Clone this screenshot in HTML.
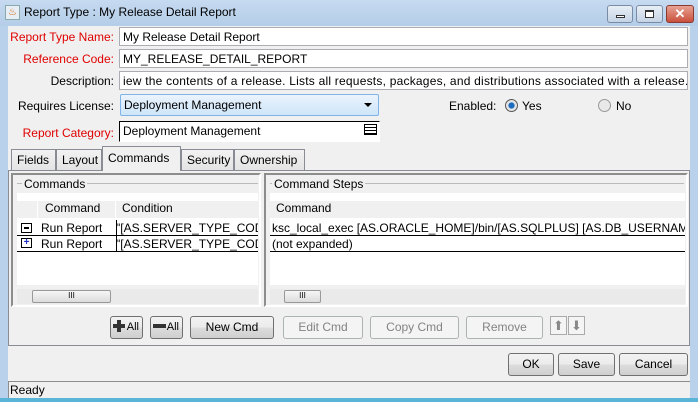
<!DOCTYPE html>
<html><head><style>
*{box-sizing:border-box;margin:0;padding:0}
body{width:698px;height:402px;overflow:hidden;background:#b9d1ea;font-family:"Liberation Sans",sans-serif;font-size:12px;color:#000;position:relative}
.a{position:absolute}
.lbl{position:absolute;text-align:right;white-space:nowrap}
.red{color:#e00000}
.fld{position:absolute;background:#fff;border:1px solid #abadb3;padding:2px 3px;white-space:nowrap;overflow:hidden;height:19px;line-height:14px}
.btn{position:absolute;border:1px solid #707070;border-radius:3px;background:linear-gradient(#f2f2f2,#ebebeb 50%,#dddddd 51%,#cfcfcf);text-align:center;line-height:20px;height:23px}
.dis{border-color:#adb2b5;background:#f4f4f4;color:#838383}
.tab{position:absolute;border:1px solid #898c95;border-bottom:none;background:linear-gradient(#f2f2f2,#e3e3e3);padding-left:5px;line-height:20px;height:22px}
.grp{position:absolute;border:2px solid #8d8d8d;border-right-color:#fff;border-bottom-color:#fff;background:#f0f0f0}
.cell{position:absolute;white-space:nowrap;overflow:hidden}
</style></head><body>
<div class="a" style="left:0;top:0;width:698px;height:26px;background:linear-gradient(#c6daf0,#b4cde8)"></div>
<div class="a" style="left:5px;top:5px;width:15px;height:15px;border:1px solid #8aa;background:#e8eef5;font-size:10px;line-height:13px;text-align:center;color:#c60">♨</div>
<div class="a" style="left:24px;top:5px;font-size:12px">Report Type : My Release Detail Report</div>
<div class="a" style="left:607px;top:5px;width:26px;height:18px;border:1px solid #7a8ca5;border-radius:3px;background:linear-gradient(#e8eef6,#c5d4e6)"><div class="a" style="left:8px;top:9px;width:9px;height:3px;border:1px solid #333;background:#fff"></div></div>
<div class="a" style="left:636px;top:5px;width:27px;height:18px;border:1px solid #7a8ca5;border-radius:3px;background:linear-gradient(#e8eef6,#c5d4e6)"><div class="a" style="left:8px;top:4px;width:9px;height:8px;border:1px solid #333;border-top-width:2px;background:#fff"></div></div>
<div class="a" style="left:666px;top:5px;width:28px;height:18px;border:1px solid #8a3a30;border-radius:3px;background:linear-gradient(#e8a294,#c9503c);color:#fff;font-weight:bold;text-align:center;line-height:16px;font-size:13px">✕</div>
<div class="a" style="left:8px;top:26px;width:682px;height:372px;background:#f0f0f0"></div>
<div class="lbl red" style="right:584px;top:30px">Report Type Name:</div>
<div class="fld" style="left:119px;top:27px;width:569px">My Release Detail Report</div>
<div class="lbl red" style="right:584px;top:52px">Reference Code:</div>
<div class="fld" style="left:119px;top:49px;width:569px">MY_RELEASE_DETAIL_REPORT</div>
<div class="lbl" style="right:584px;top:74px">Description:</div>
<div class="fld" style="left:119px;top:71px;width:569px;letter-spacing:0.22px">iew the contents of a release. Lists all requests, packages, and distributions associated with a release.</div>
<div class="lbl" style="right:584px;top:99px">Requires License:</div>
<div class="a" style="left:120px;top:94px;width:259px;height:22px;border:1px solid #7eb4ea;border-radius:2px;background:linear-gradient(#ecf4fc,#dcecfc 50%,#cde6f7);padding:3px 3px;line-height:14px">Deployment Management<span class="a" style="right:6px;top:8px;width:0;height:0;border-left:4px solid transparent;border-right:4px solid transparent;border-top:4px solid #000"></span></div>
<div class="lbl" style="left:449px;top:99px">Enabled:</div>
<div class="a" style="left:505px;top:99px;width:13px;height:13px;border-radius:50%;border:1px solid #555;background:radial-gradient(#1c6dc0 35%,#e6e6e6 45%)"></div>
<div class="lbl" style="left:522px;top:99px">Yes</div>
<div class="a" style="left:598px;top:99px;width:13px;height:13px;border-radius:50%;border:1px solid #999;background:#e8e8e8"></div>
<div class="lbl" style="left:616px;top:99px">No</div>
<div class="lbl red" style="right:584px;top:126px">Report Category:</div>
<div class="a" style="left:119px;top:121px;width:261px;height:21px;border:1px solid #000;border-right-color:#fff;border-bottom-color:#fff;background:#fff;padding:2px 3px;line-height:14px">Deployment Management</div>
<div class="a" style="left:364px;top:124px;width:13px;height:11px;border:1px solid #000;background:repeating-linear-gradient(#fff 0 2px,#000 2px 3px)"></div>
<div class="tab" style="left:11px;top:149px;width:45px">Fields</div>
<div class="tab" style="left:56px;top:149px;width:46px">Layout</div>
<div class="tab" style="left:181px;top:149px;width:53px">Security</div>
<div class="tab" style="left:234px;top:149px;width:71px">Ownership</div>
<div class="a" style="left:8px;top:170px;width:682px;height:176px;border:1px solid #898c95;background:#f0f0f0"></div>
<div class="tab" style="left:102px;top:146px;width:79px;height:25px;background:#f0f0f0;line-height:22px">Commands</div>
<div class="grp" style="left:11px;top:173px;width:250px;height:134px"></div>
<div class="a" style="left:17px;top:183px;width:241px;height:1px;background:#bbb"></div>
<div class="a" style="left:22px;top:177px;background:#f0f0f0;padding:0 2px">Commands</div>
<div class="a" style="left:17px;top:193px;width:241px;height:92px;background:#fff"></div>
<div class="a" style="left:17px;top:193px;width:241px;height:25px;background:linear-gradient(#fff 0 8px,#f0f0f0 8px)"></div>
<div class="a" style="left:37px;top:193px;width:1px;height:25px;background:#fff"></div>
<div class="a" style="left:115px;top:193px;width:1px;height:25px;background:#fff"></div>
<div class="cell" style="left:45px;top:201px">Command</div>
<div class="cell" style="left:122px;top:201px">Condition</div>
<div class="a" style="left:21px;top:223px;width:11px;height:10px;border:1px solid #000;background:#fff"><div class="a" style="left:2px;top:3px;width:5px;height:2px;background:#000"></div></div>
<div class="a" style="left:21px;top:238px;width:11px;height:10px;border:1px solid #000;background:#fff;font-size:10px;line-height:8px;text-align:center;font-weight:bold;color:#23c">+</div>
<div class="cell" style="left:41px;top:221px">Run Report</div>
<div class="cell" style="left:116px;top:221px;width:142px">"[AS.SERVER_TYPE_CODE</div>
<div class="cell" style="left:41px;top:237px">Run Report</div>
<div class="cell" style="left:116px;top:237px;width:142px">"[AS.SERVER_TYPE_CODE</div>
<div class="a" style="left:17px;top:235px;width:241px;height:1px;background:#000"></div>
<div class="a" style="left:17px;top:251px;width:241px;height:1px;background:#000"></div>
<div class="a" style="left:116px;top:220px;width:1px;height:32px;background:#000"></div>
<div class="a" style="left:17px;top:289px;width:241px;height:15px;background:#eaeaea"></div>
<div class="a" style="left:32px;top:290px;width:79px;height:13px;border:1px solid #999;border-radius:2px;background:linear-gradient(#f6f6f6,#dcdcdc);font-size:8px;text-align:center;line-height:10px">III</div>
<div class="grp" style="left:264px;top:173px;width:424px;height:134px"></div>
<div class="a" style="left:270px;top:183px;width:414px;height:1px;background:#bbb"></div>
<div class="a" style="left:272px;top:177px;background:#f0f0f0;padding:0 2px">Command Steps</div>
<div class="a" style="left:270px;top:193px;width:415px;height:92px;background:#fff"></div>
<div class="a" style="left:270px;top:193px;width:415px;height:25px;background:linear-gradient(#fff 0 8px,#f0f0f0 8px)"></div>
<div class="cell" style="left:276px;top:201px">Command</div>
<div class="cell" style="left:272px;top:221px;width:413px">ksc_local_exec [AS.ORACLE_HOME]/bin/[AS.SQLPLUS] [AS.DB_USERNAME]</div>
<div class="cell" style="left:272px;top:237px">(not expanded)</div>
<div class="a" style="left:270px;top:235px;width:415px;height:1px;background:#000"></div>
<div class="a" style="left:270px;top:251px;width:415px;height:1px;background:#000"></div>
<div class="a" style="left:270px;top:289px;width:415px;height:15px;background:#eaeaea"></div>
<div class="a" style="left:284px;top:290px;width:37px;height:13px;border:1px solid #999;border-radius:2px;background:linear-gradient(#f6f6f6,#dcdcdc);font-size:8px;text-align:center;line-height:10px">III</div>
<div class="btn" style="left:110px;top:316px;width:33px;font-size:11px;text-align:right;padding-right:3px">All</div>
<div class="a" style="left:113px;top:320px;width:12px;height:12px;background:linear-gradient(transparent 4px,#333 4px 8px,transparent 8px),linear-gradient(90deg,transparent 4px,#333 4px 8px,transparent 8px)"></div>
<div class="btn" style="left:150px;top:316px;width:33px;font-size:11px;text-align:right;padding-right:3px">All</div>
<div class="a" style="left:153px;top:324px;width:13px;height:4px;background:#333"></div>
<div class="btn" style="left:190px;top:316px;width:84px">New Cmd</div>
<div class="btn dis" style="left:283px;top:316px;width:80px">Edit Cmd</div>
<div class="btn dis" style="left:370px;top:316px;width:89px">Copy Cmd</div>
<div class="btn dis" style="left:466px;top:316px;width:77px">Remove</div>
<div class="a" style="left:550px;top:316px;width:17px;height:19px;border:1px solid #aaa;background:#f4f4f4;color:#888;text-align:center;line-height:17px;font-size:13px">⬆</div>
<div class="a" style="left:568px;top:316px;width:17px;height:19px;border:1px solid #aaa;background:#f4f4f4;color:#888;text-align:center;line-height:17px;font-size:13px">⬇</div>
<div class="btn" style="left:508px;top:353px;width:46px">OK</div>
<div class="btn" style="left:558px;top:353px;width:57px">Save</div>
<div class="btn" style="left:619px;top:353px;width:69px">Cancel</div>
<div class="a" style="left:8px;top:381px;width:682px;height:17px;border-top:1px solid #8d8d8d;border-left:1px solid #8d8d8d;padding-left:1px;line-height:16px">Ready</div>
<div class="a" style="left:0;top:398px;width:698px;height:4px;background:#5ab4d8"></div>
</body></html>
